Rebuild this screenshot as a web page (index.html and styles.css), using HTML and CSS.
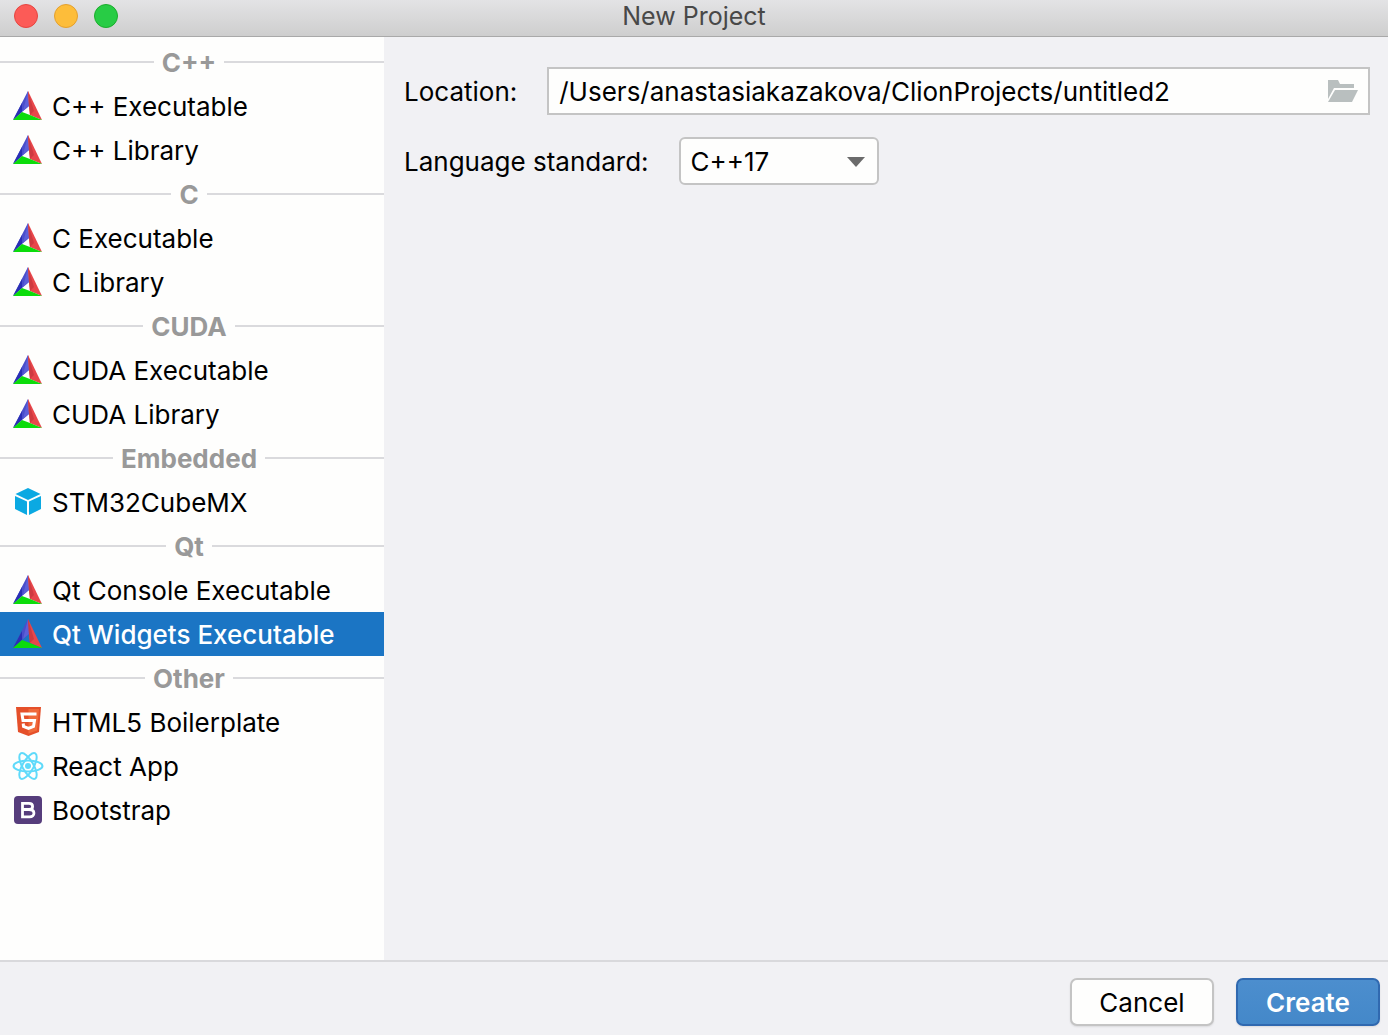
FILE: index.html
```html
<!DOCTYPE html>
<html lang="en">
<head>
<meta charset="utf-8">
<title>New Project</title>
<link rel="stylesheet" href="styles.css">
</head>
<body>
<svg class="defs" aria-hidden="true">
  <symbol id="cmake" viewBox="0 -1 32 32">
    <path fill="#4a4ecb" d="M16 0 17 15 10 21 1 29z"/>
    <path fill="#2a2fb4" d="M10 12 10 21 1 29z"/>
    <path fill="#5d60d8" d="M16 0 17 15 11 20z"/>
    <path fill="#e8474b" d="M16 0 30 29 18 24 17 15z"/>
    <path fill="#cf3a40" d="M16 0 22 20 18 24 17 15z"/>
    <path fill="#0bdc0b" d="M1 29 10 21 18 24 30 29z"/>
  </symbol>
</svg>
<div class="window">
  <header class="titlebar">
    <div class="lights">
      <button class="light close" aria-label="Close"></button>
      <button class="light minimize" aria-label="Minimize"></button>
      <button class="light zoom" aria-label="Zoom"></button>
    </div>
    <h1 class="title">New Project</h1>
  </header>
  <div class="content">
    <nav class="sidebar">
      <h2 class="group">C++</h2>
      <a class="item" href="#"><svg class="icon"><use href="#cmake"/></svg>C++ Executable</a>
      <a class="item" href="#"><svg class="icon"><use href="#cmake"/></svg>C++ Library</a>
      <h2 class="group">C</h2>
      <a class="item" href="#"><svg class="icon"><use href="#cmake"/></svg>C Executable</a>
      <a class="item" href="#"><svg class="icon"><use href="#cmake"/></svg>C Library</a>
      <h2 class="group">CUDA</h2>
      <a class="item" href="#"><svg class="icon"><use href="#cmake"/></svg>CUDA Executable</a>
      <a class="item" href="#"><svg class="icon"><use href="#cmake"/></svg>CUDA Library</a>
      <h2 class="group">Embedded</h2>
      <a class="item" href="#"><svg class="icon" viewBox="0 0 32 32"><g fill="#0ba9e2"><path d="M16 2 28.500 8 16 14 3.500 8z"/><path d="M3 10 15 15.500V29L3 23z"/><path d="M29 10 17 15.500V29L29 23z"/></g></svg>STM32CubeMX</a>
      <h2 class="group">Qt</h2>
      <a class="item" href="#"><svg class="icon"><use href="#cmake"/></svg>Qt Console Executable</a>
      <a class="item selected" href="#" aria-current="true"><svg class="icon"><use href="#cmake"/></svg>Qt Widgets Executable</a>
      <h2 class="group">Other</h2>
      <a class="item" href="#"><svg class="icon" viewBox="0 -1 32 32"><path fill="#e5502a" d="M4 0H29L27 25 16.500 29 6 25z"/><path fill="#f06a3a" d="M16.500 2H27L25 23.500 16.500 26.500z"/><path fill="none" stroke="#fff" stroke-width="3" d="M24.500 7H10L11 13.500H22.500L21.500 19.500 16.500 21.500 11.500 19.500 11.200 16.500"/></svg>HTML5 Boilerplate</a>
      <a class="item" href="#"><svg class="icon" viewBox="0 -1 32 32"><g fill="none" stroke="#5fdafa" stroke-width="2"><ellipse cx="16" cy="15" rx="14.500" ry="5.500"/><ellipse cx="16" cy="15" rx="14.500" ry="5.500" transform="rotate(60 16 15)"/><ellipse cx="16" cy="15" rx="14.500" ry="5.500" transform="rotate(120 16 15)"/></g><circle cx="16" cy="15" r="3" fill="#5fdafa"/></svg>React App</a>
      <a class="item" href="#"><svg class="icon" viewBox="0 -1 32 32"><rect x="2" y="1" width="28" height="28" rx="4" fill="#563d7c"/><path fill="none" stroke="#fff" stroke-width="2.800" d="M10.500 8.400H17C21.800 8.400 21.800 14.500 17 14.500H10.500M17 14.500C23.500 14.500 23.500 21.800 17.500 21.800H10.500V7"/></svg>Bootstrap</a>
    </nav>
    <main class="form">
      <div class="row">
        <label for="location">Location:</label>
        <div class="path">
          <input id="location" type="text" value="/Users/anastasiakazakova/ClionProjects/untitled2">
          <button class="browse" aria-label="Browse"><svg width="32" height="24" viewBox="0 -1 32 24"><g fill="#b9bfbf"><path d="M1 0H11L13 4H27V8H7L1 19z"/><path d="M8 10H31L25 22H1z"/></g></svg></button>
        </div>
      </div>
      <div class="row">
        <label for="standard">Language standard:</label>
        <div class="picker">
          <select id="standard"><option>C++17</option></select>
          <svg class="arrow" width="18" height="10" viewBox="0 0 18 10"><path fill="#6b6b6b" d="M0 0H18L9 10z"/></svg>
        </div>
      </div>
    </main>
  </div>
  <footer class="footer">
    <button class="button">Cancel</button>
    <button class="button primary">Create</button>
  </footer>
</div>
</body>
</html>
```

FILE: styles.css
```css
* { box-sizing: border-box; }
body { margin: 0; color: #000; background: #f1f1f4; }
body, input, select, button { font-family: Inter, "Liberation Sans", sans-serif; font-size: 26px; }
.defs { display: none; }
.window { display: flex; flex-direction: column; min-height: 100vh; }

.titlebar {
  display: grid;
  grid-template-columns: 1fr auto 1fr;
  height: 37px;
  padding: 0 12px 6px;
  align-items: center;
  background: linear-gradient(#e3e3e5, #cecece);
  border-bottom: 1px solid #a9a9a9;
}
.lights { display: flex; gap: 16px; padding-left: 2px; }
.light { width: 24px; height: 24px; padding: 0; border: 1px solid; border-radius: 50%; }
.close { background: #fc5b57; border-color: #e64540; }
.minimize { background: #fdbd3a; border-color: #e4a02e; }
.zoom { background: #28cc45; border-color: #1bad2c; }
.title { margin: 0; font-size: 25px; font-weight: 400; line-height: 32px; color: #484848; }

.content { display: flex; flex: 1; }
.sidebar { flex: none; width: 384px; padding: 3px 0; background: #fefefd; }
.group {
  display: flex;
  align-items: center;
  gap: 8px;
  height: 44px;
  margin: 0;
  font-size: 26px;
  font-weight: 700;
  color: #999;
}
.group::before, .group::after { content: ""; flex: 1; height: 2px; background: #dadadd; }
.group::after { flex: 1 0 6px; }
.item {
  display: flex;
  align-items: center;
  gap: 8px;
  height: 44px;
  padding-left: 12px;
  color: #000;
  text-decoration: none;
}
.icon { flex: none; width: 32px; height: 32px; }
.selected { color: #fff; background: #1b75c4; font-weight: 500; }

.form { display: flex; flex: 1; flex-direction: column; gap: 22px; padding: 30px 18px 30px 20px; }
.row { display: flex; align-items: center; gap: 30px; }
.path { display: flex; flex: 1; align-items: center; height: 48px; padding-right: 9px; border: 2px solid #c4c4c4; background: #fefefd; }
.path input { flex: 1; min-width: 0; padding: 0 10px; border: 0; outline: 0; background: transparent; }
.browse { display: flex; padding: 0; border: 0; background: none; }
.picker { position: relative; }
.picker select { appearance: none; width: 200px; height: 48px; padding: 0 10px; border: 2px solid #c4c4c4; border-radius: 6px; background: #fefefd; color: #000; }
.arrow { position: absolute; top: 20px; right: 14px; pointer-events: none; }

.footer { display: flex; justify-content: flex-end; gap: 22px; padding: 16px 8px 9px; border-top: 2px solid #d9d9dc; }
.button { width: 144px; height: 48px; padding: 0; border: 2px solid #c4c4c4; border-radius: 7px; background: #fefefd; color: #000; box-shadow: 0 1px 2px #00000018; }
.primary { border-color: #3069b0; background: linear-gradient(#4c8ece, #4488c9); color: #fff; font-weight: 600; }
```
